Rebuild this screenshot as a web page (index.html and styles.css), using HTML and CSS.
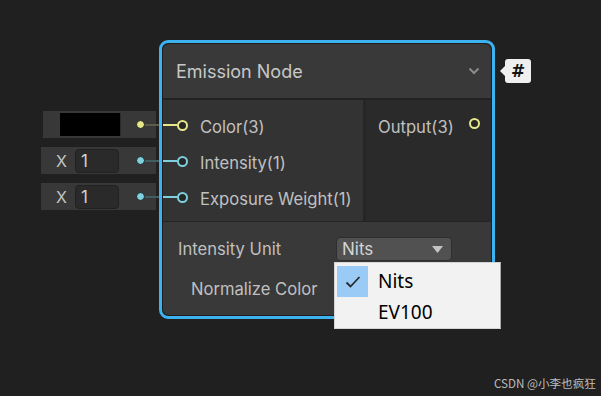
FILE: index.html
```html
<!DOCTYPE html>
<html>
<head>
<meta charset="utf-8">
<link rel="stylesheet" href="styles.css">
</head>
<body>
<div class="canvas">
  <div class="fields">
    <div class="field f-color">
      <span class="swatch"></span>
      <span class="dot dot-y"></span>
      <span class="wire wire-y"></span>
    </div>
    <div class="field f-num">
      <span class="xlab">X</span>
      <span class="num">1</span>
      <span class="dot dot-c"></span>
      <span class="wire wire-c"></span>
    </div>
    <div class="field f-num">
      <span class="xlab">X</span>
      <span class="num">1</span>
      <span class="dot dot-c"></span>
      <span class="wire wire-c"></span>
    </div>
  </div>

  <div class="node">
    <div class="inner">
      <div class="header">
        <span class="title">Emission Node</span>
        <svg class="chev" width="12" height="8" viewBox="0 0 12 8"><path d="M1.5 1.5 L6 6 L10.5 1.5" fill="none" stroke="#8c8c8c" stroke-width="2"/></svg>
      </div>
      <div class="ports">
        <div class="inputs">
          <div class="port">
            <span class="stub stub-y"></span><span class="ring ring-y"></span><span class="plabel">Color(3)</span>
          </div>
          <div class="port">
            <span class="stub stub-c"></span><span class="ring ring-c"></span><span class="plabel">Intensity(1)</span>
          </div>
          <div class="port">
            <span class="stub stub-c"></span><span class="ring ring-c"></span><span class="plabel">Exposure Weight(1)</span>
          </div>
        </div>
        <div class="outputs">
          <div class="port port-out">
            <span class="plabel">Output(3)</span><span class="ring ring-y"></span>
          </div>
        </div>
      </div>
      <div class="settings">
        <div class="srow">
          <span class="slabel">Intensity Unit</span>
          <div class="dropdown">
            <span>Nits</span>
            <svg width="11" height="7" viewBox="0 0 11 7"><path d="M0 0 H11 L5.5 7 Z" fill="#c4c4c4"/></svg>
          </div>
        </div>
        <div class="srow srow-indent">
          <span class="slabel">Normalize Color</span>
        </div>
      </div>
    </div>
  </div>

  <div class="badge">#</div>

  <div class="popup">
    <div class="item">
      <span class="check">
        <svg width="16" height="14" viewBox="0 0 16 14"><path d="M1.5 7.5 L5.5 11.5 L14.5 2" fill="none" stroke="#2b2b2b" stroke-width="1.8"/></svg>
      </span>
      <span class="itext">Nits</span>
    </div>
    <div class="item">
      <span class="check empty"></span>
      <span class="itext">EV100</span>
    </div>
  </div>

  <div class="wm">CSDN @小李也疯狂</div>
</div>
</body>
</html>
```

FILE: styles.css
```css
html, body {
  margin: 0;
  padding: 0;
  background: #202020;
}
.canvas {
  position: relative;
  width: 601px;
  height: 396px;
  overflow: hidden;
  background: #202020;
  font-family: "Inter", "Noto Sans", sans-serif;
  color: #c2c2c2;
}

/* left-side inline fields attached to input ports */
.fields {
  position: absolute;
  left: 41px;
  top: 111px;
  width: 115px;
  display: flex;
  flex-direction: column;
  align-items: flex-end;
  gap: 9px;
}
.field {
  display: flex;
  align-items: center;
  height: 27px;
  background: #383838;
  box-sizing: border-box;
}
.f-color { width: 113px; }
.f-num { width: 115px; }
.swatch {
  width: 61px;
  height: 23px;
  margin-left: 17px;
  background: #000;
  box-shadow: inset -1px 0 0 #2a2a2a;
}
.f-color .dot { margin-left: 15px; }
.xlab {
  width: 10px;
  margin-left: 15px;
  font-size: 16px;
  text-align: center;
  color: #c4c4c4;
}
.num {
  width: 44px;
  height: 24px;
  margin-left: 9px;
  box-sizing: border-box;
  padding-left: 5px;
  background: #2a2a2a;
  border: 1px solid #212121;
  border-radius: 4px;
  font-size: 17px;
  line-height: 22px;
  color: #d2d2d2;
}
.f-num .dot { margin-left: 17px; }
.dot {
  width: 7px;
  height: 7px;
  border-radius: 50%;
  border: 1px solid #1e1e1e;
  flex: none;
}
.dot-y { background: #e6e68a; }
.dot-c { background: #7dd0dc; }
.wire {
  width: 14px;
  height: 2px;
  margin-right: -3px;
  flex: none;
}
.wire-y { background: #5d5d45; }
.wire-c { background: #3f5e62; }

/* node */
.node {
  position: absolute;
  left: 159px;
  top: 40px;
  width: 336px;
  height: 279px;
  box-sizing: border-box;
  border: 3px solid #3db2f0;
  border-radius: 9px;
  padding: 1px;
  background: #1f1f1f;
}
.inner {
  height: 100%;
  border-radius: 6px;
  overflow: hidden;
  display: flex;
  flex-direction: column;
  background: #232323;
}
.header {
  height: 54px;
  flex: none;
  background: #393939;
  display: flex;
  align-items: center;
  padding: 0 11px 0 13px;
  border-bottom: 2px solid #222;
}
.title {
  font-size: 18px;
  color: #c8c8c8;
  flex: 1;
  padding-top: 1px;
}
.chev { flex: none; }

.ports {
  display: flex;
  height: 121px;
  flex: none;
  border-bottom: 1px solid #242424;
}
.inputs {
  width: 203px;
  background: #333333;
  border-right: 3px solid #262626;
  padding-top: 7px;
  box-sizing: border-box;
}
.outputs {
  flex: 1;
  background: #2a2a2a;
  padding-top: 7px;
}
.port {
  height: 36px;
  display: flex;
  align-items: center;
}
.stub {
  width: 14px;
  height: 2px;
  flex: none;
}
.stub-y { background: #e6e68a; }
.stub-c { background: #7dd0dc; }
.ring {
  width: 11px;
  height: 11px;
  box-sizing: border-box;
  border-radius: 50%;
  border: 2px solid;
  background: #262626;
  flex: none;
}
.ring-y { border-color: #e6e68a; }
.ring-c { border-color: #7dd0dc; }
.plabel {
  font-size: 16.6px;
  margin-left: 12px;
  color: #c0c0c0;
  padding-top: 3px;
}
.port-out {
  padding: 0 11px 0 12px;
}
.port-out .plabel { margin-left: 0; flex: 1; }
.port-out .ring { margin-top: -3px; }

.settings {
  flex: 1;
  background: #393939;
  padding-top: 15px;
}
.srow {
  display: flex;
  align-items: center;
  height: 24px;
  padding-left: 15px;
}
.srow-indent {
  margin-top: 16px;
  padding-left: 28px;
}
.slabel {
  width: 158px;
  font-size: 16.6px;
  color: #c0c0c0;
}
.dropdown {
  width: 116px;
  height: 24px;
  box-sizing: border-box;
  background: #515151;
  border: 1px solid #2e2e2e;
  border-radius: 4px;
  display: flex;
  align-items: center;
  justify-content: space-between;
  padding: 0 8px 0 5px;
  font-size: 17px;
  color: #d4d4d4;
}

/* badge */
.badge {
  position: absolute;
  left: 505px;
  top: 59px;
  width: 26px;
  height: 24px;
  background: #efefef;
  border-radius: 3px;
  color: #111;
  font-family: "DejaVu Sans", sans-serif;
  font-weight: bold;
  font-size: 17px;
  line-height: 24px;
  text-align: center;
}
.badge::before {
  content: "";
  position: absolute;
  left: -5px;
  top: 7px;
  border-top: 5px solid transparent;
  border-bottom: 5px solid transparent;
  border-right: 5px solid #efefef;
}

/* popup menu */
.popup {
  position: absolute;
  left: 334px;
  top: 262px;
  width: 167px;
  height: 67px;
  box-sizing: border-box;
  background: #f2f2f2;
  border: 1px solid #d4d4d4;
  border-right-color: #a9a9a9;
  padding: 3px 2px;
  font-family: "Noto Sans", "Open Sans", sans-serif;
  color: #000;
}
.item {
  height: 31px;
  display: flex;
  align-items: center;
}
.check {
  width: 31px;
  height: 31px;
  display: flex;
  align-items: center;
  justify-content: center;
  background: #99cbf6;
  flex: none;
}
.check.empty { background: transparent; }
.itext {
  margin-left: 10px;
  font-size: 19px;
  margin-top: -2px;
}

.wm {
  position: absolute;
  left: 494px;
  top: 375px;
  font-family: "Noto Sans CJK SC", "Noto Sans", sans-serif;
  font-size: 11.6px;
  color: #bcbcbc;
}
```
